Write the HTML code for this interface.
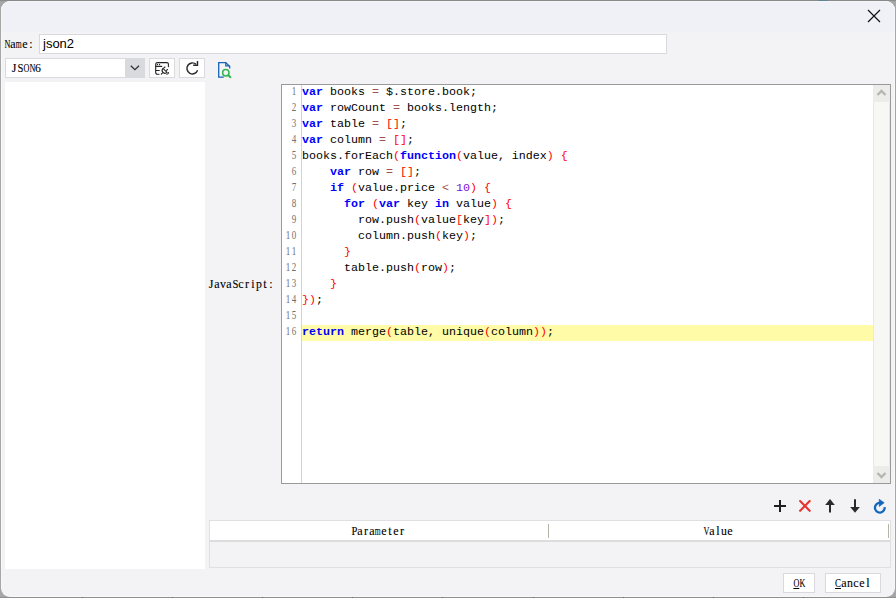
<!DOCTYPE html>
<html><head><meta charset="utf-8">
<style>
*{margin:0;padding:0;box-sizing:border-box}
html,body{width:896px;height:598px;overflow:hidden;background:#a6a6a6;font-family:"Liberation Sans",sans-serif}
.abs{position:absolute}
#dlg{position:absolute;left:1px;top:1px;width:894px;height:596px;background:#f3f3f6;border-radius:9px;overflow:hidden}
#title{position:absolute;left:0;top:0;width:894px;height:31px;background:#f0f1f7}
.ss{font-family:"Liberation Serif",serif;font-size:12px;color:#000;white-space:nowrap;line-height:14px;-webkit-text-stroke:0.12px #000}
.ss i{font-style:normal;display:inline-flex;justify-content:center;width:6px}
.ss b{font-weight:normal;display:inline-block}
#nameinp{left:39px;top:34px;width:628px;height:20px;background:#fff;border:1px solid #d9d9dd}
#combo{left:5px;top:58px;width:140px;height:20px;background:#fff;border:1px solid #dadade}
#drop{left:119px;top:-1px;width:20px;height:20px;background:#d9dadd}
.btn{top:58px;width:26px;height:20px;background:#fff;border:1px solid #dadade}
#leftp{left:5px;top:82px;width:200px;height:487px;background:#fff}
#editor{left:281px;top:84px;width:610px;height:400px;background:#fff;border:1px solid #9a9a9a}
#gutter{left:0;top:0;width:20px;height:398px;border-right:1px solid #d3d3d3}
#code{left:20px;top:-1px;font-family:"Liberation Mono",monospace;font-size:11.67px;line-height:16px;white-space:pre;color:#000}
.ln{position:absolute;right:4px;font-family:"Liberation Serif",serif;font-size:12px;line-height:16px;color:#707070;white-space:nowrap}
.ln i{font-style:normal;display:inline-flex;justify-content:center;width:6px}
.ln b{font-weight:normal;display:inline-block;transform:scaleX(0.75)}
.k{color:#0000ff;font-weight:bold}
.b{color:#ff0000}
.o{color:#a05050}
.n{color:#7a10dc}
#hl{left:20px;top:240px;width:571px;height:16px;background:#fffba6}
#vs{left:591px;top:0;width:17px;height:398px;background:#f7f7f5;border-left:1px solid #ebe8dc;border-right:1px solid #ebe8dc}
.sbtn{left:591px;width:17px;height:17px;background:#ececea}
#table{left:209px;top:520px;width:682px;height:48px;border:1px solid #e0e0e3;background:#f3f3f6}
#thead{left:0;top:0;width:680px;height:21px;background:#fff;border-bottom:2px solid #dcdcdc}
.pbtn{top:573px;height:20px;background:#fff;border:1px solid #dadade}
</style></head><body>
<div class="abs" style="left:0;top:0;width:896px;height:1px;background:#8a8a8a"></div><div class="abs" style="left:0;top:597px;width:896px;height:1px;background:#8f8f8f"></div>
<div class="abs" style="left:818px;top:0;width:10px;height:1px;background:#5e8590"></div>
<div class="abs" style="left:82px;top:597px;width:1px;height:1px;background:#666"></div><div class="abs" style="left:172px;top:597px;width:1px;height:1px;background:#666"></div><div class="abs" style="left:262px;top:597px;width:1px;height:1px;background:#666"></div><div class="abs" style="left:352px;top:597px;width:1px;height:1px;background:#666"></div><div class="abs" style="left:442px;top:597px;width:1px;height:1px;background:#666"></div><div class="abs" style="left:533px;top:597px;width:1px;height:1px;background:#666"></div><div class="abs" style="left:623px;top:597px;width:1px;height:1px;background:#666"></div><div class="abs" style="left:713px;top:597px;width:1px;height:1px;background:#666"></div><div class="abs" style="left:803px;top:597px;width:1px;height:1px;background:#666"></div>
<div id="dlg">
  <div id="title"></div>
  <div class="abs" style="left:0;top:0;width:894px;height:596px;border-radius:9px;border:1px solid rgba(255,255,255,0.4)"></div>
</div>
<!-- close X -->
<svg class="abs" style="left:866px;top:8px" width="16" height="16" viewBox="0 0 16 16"><path d="M2 2L14 14M14 2L2 14" stroke="#111" stroke-width="1.2"/></svg>

<div class="abs ss" style="left:4px;top:37px"><i><b style="transform:scaleX(0.681)">N</b></i><i><b>a</b></i><i><b style="transform:scaleX(0.632)">m</b></i><i><b>e</b></i><i><b>:</b></i></div>
<div id="nameinp" class="abs"><span class="abs" style="left:3px;top:1px;font-size:13px;color:#000">json2</span></div>

<div id="combo" class="abs"><div class="abs ss" style="left:5px;top:2px"><i><b>J</b></i><i><b style="transform:scaleX(0.884)">S</b></i><i><b style="transform:scaleX(0.681)">O</b></i><i><b style="transform:scaleX(0.681)">N</b></i><i><b style="transform:scaleX(0.983)">6</b></i></div>
  <div id="drop" class="abs"><svg class="abs" style="left:5px;top:6px" width="10" height="8" viewBox="0 0 10 8"><path d="M0.8 1.8L4.9 5.7L9 1.8" stroke="#2e2e2e" stroke-width="1.2" fill="none"/></svg></div>
</div>
<div class="abs btn" style="left:149px"></div>
<div class="abs btn" style="left:179px"></div>


<svg class="abs" style="left:149px;top:58px" width="26" height="20" viewBox="0 0 26 20"><g fill="none" stroke="#262626" stroke-width="1.1" stroke-linecap="round"><path d="M10 16.2H8.2A1.5 1.5 0 0 1 6.7 14.7V6.1A1.5 1.5 0 0 1 8.2 4.6H17.9A1.5 1.5 0 0 1 19.4 6.1V8.6"/><path d="M6.7 8.4H12.7M6.7 12.5H10.3"/><path d="M17.8 16.3A2 2 0 0 0 19.6 14.5"/><path d="M14 10.3L18.1 14.4A2.9 2.9 0 0 1 14 10.3Z"/><path d="M13.6 14.8L12.3 16.1M15 9.9L15.9 9M17.5 12.4L18.4 11.5"/></g><circle cx="8.4" cy="6.5" r="0.65" fill="#262626"/><circle cx="10.5" cy="6.5" r="0.65" fill="#262626"/></svg>
<svg class="abs" style="left:179px;top:58px" width="26" height="20" viewBox="0 0 26 20"><g fill="none" stroke="#2a2a2a" stroke-width="1.45"><path d="M17.1 6.3A5.5 5.5 0 1 0 18.6 12.3"/><path d="M14.2 7.2H18.5V3"/></g></svg>
<svg class="abs" style="left:212px;top:58px" width="26" height="24" viewBox="0 0 26 24"><g fill="none" stroke="#1764b8" stroke-width="1.3"><path d="M11.8 19.2H6.7V4.6H13.8L17.7 8.5V10.6"/><path d="M13.8 4.6V7.8H17.7"/></g><circle cx="13.8" cy="14.8" r="3.2" fill="none" stroke="#30b550" stroke-width="1.5"/><path d="M16.3 17.3L18.4 19.2" stroke="#30b550" stroke-width="2" stroke-linecap="round"/></svg>
<div id="leftp" class="abs"></div>

<div class="abs ss" style="left:208px;top:277px"><i><b>J</b></i><i><b>a</b></i><i><b style="transform:scaleX(0.983)">v</b></i><i><b>a</b></i><i><b style="transform:scaleX(0.884)">S</b></i><i><b>c</b></i><i><b>r</b></i><i><b>i</b></i><i><b style="transform:scaleX(0.983)">p</b></i><i><b>t</b></i><i><b>:</b></i></div>

<div id="editor" class="abs">
  <div id="hl" class="abs"></div>
  <div id="gutter" class="abs"><div class="ln" style="top:-2px"><i><b>1</b></i></div><div class="ln" style="top:14px"><i><b>2</b></i></div><div class="ln" style="top:30px"><i><b>3</b></i></div><div class="ln" style="top:46px"><i><b>4</b></i></div><div class="ln" style="top:62px"><i><b>5</b></i></div><div class="ln" style="top:78px"><i><b>6</b></i></div><div class="ln" style="top:94px"><i><b>7</b></i></div><div class="ln" style="top:110px"><i><b>8</b></i></div><div class="ln" style="top:126px"><i><b>9</b></i></div><div class="ln" style="top:142px"><i><b>1</b></i><i><b>0</b></i></div><div class="ln" style="top:158px"><i><b>1</b></i><i><b>1</b></i></div><div class="ln" style="top:174px"><i><b>1</b></i><i><b>2</b></i></div><div class="ln" style="top:190px"><i><b>1</b></i><i><b>3</b></i></div><div class="ln" style="top:206px"><i><b>1</b></i><i><b>4</b></i></div><div class="ln" style="top:222px"><i><b>1</b></i><i><b>5</b></i></div><div class="ln" style="top:238px"><i><b>1</b></i><i><b>6</b></i></div></div>
  <div id="code" class="abs"><span class="k">var</span> books <span class="o">=</span> $.store.book;
<span class="k">var</span> rowCount <span class="o">=</span> books.length;
<span class="k">var</span> table <span class="o">=</span> <span class="b">[]</span>;
<span class="k">var</span> column <span class="o">=</span> <span class="b">[]</span>;
books.forEach<span class="b">(</span><span class="k">function</span><span class="b">(</span>value, index<span class="b">)</span> <span class="b">{</span>
    <span class="k">var</span> row <span class="o">=</span> <span class="b">[]</span>;
    <span class="k">if</span> <span class="b">(</span>value.price <span class="o">&lt;</span> <span class="n">10</span><span class="b">)</span> <span class="b">{</span>
      <span class="k">for</span> <span class="b">(</span><span class="k">var</span> key <span class="k">in</span> value<span class="b">)</span> <span class="b">{</span>
        row.push<span class="b">(</span>value<span class="b">[</span>key<span class="b">])</span>;
        column.push<span class="b">(</span>key<span class="b">)</span>;
      <span class="b">}</span>
      table.push<span class="b">(</span>row<span class="b">)</span>;
    <span class="b">}</span>
<span class="b">})</span>;

<span class="k">return</span> merge<span class="b">(</span>table, unique<span class="b">(</span>column<span class="b">))</span>;</div>
  <div id="vs" class="abs"></div>
  <div class="abs sbtn" style="top:0"><svg class="abs" style="left:3px;top:4px" width="11" height="8" viewBox="0 0 11 8"><path d="M1.5 6L5.5 2L9.5 6" stroke="#b5b5b5" stroke-width="2.3" fill="none"/></svg></div>
  <div class="abs sbtn" style="top:381px"><svg class="abs" style="left:3px;top:5px" width="11" height="8" viewBox="0 0 11 8"><path d="M1.5 2L5.5 6L9.5 2" stroke="#b5b5b5" stroke-width="2.3" fill="none"/></svg></div>
</div>

<div id="table" class="abs">
  <div id="thead" class="abs"></div>
  <div class="abs ss" style="left:141px;top:3px"><i><b style="transform:scaleX(0.884)">P</b></i><i><b>a</b></i><i><b>r</b></i><i><b>a</b></i><i><b style="transform:scaleX(0.632)">m</b></i><i><b>e</b></i><i><b>t</b></i><i><b>e</b></i><i><b>r</b></i></div>
  <div class="abs" style="left:338px;top:3px;width:1px;height:14px;background:#b5b2a6"></div>
  <div class="abs ss" style="left:493px;top:3px"><i><b style="transform:scaleX(0.681)">V</b></i><i><b>a</b></i><i><b>l</b></i><i><b style="transform:scaleX(0.983)">u</b></i><i><b>e</b></i></div>
  <div class="abs" style="left:678px;top:3px;width:1px;height:14px;background:#b5b2a6"></div>
</div>


<svg class="abs" style="left:772px;top:498px" width="16" height="16" viewBox="0 0 16 16"><path d="M8 2V14M2 8H14" stroke="#1e1e1e" stroke-width="2"/></svg>
<svg class="abs" style="left:797px;top:498px" width="16" height="16" viewBox="0 0 16 16"><path d="M3.1 3.1L12.7 12.8M12.7 3.1L3.1 12.8" stroke="#e6332f" stroke-width="2.1" stroke-linecap="round"/></svg>
<svg class="abs" style="left:822px;top:498px" width="16" height="16" viewBox="0 0 16 16"><path d="M8 6V14.6" stroke="#2a2a2a" stroke-width="2"/><path d="M3.2 7L8 1.1L12.8 7Z" fill="#2a2a2a"/></svg>
<svg class="abs" style="left:847px;top:498px" width="16" height="16" viewBox="0 0 16 16"><path d="M8 1.3V10" stroke="#2a2a2a" stroke-width="2"/><path d="M3.2 9L8 14.8L12.8 9Z" fill="#2a2a2a"/></svg>
<svg class="abs" style="left:872px;top:498px" width="16" height="16" viewBox="0 0 16 16"><path d="M12.6 9.2A4.85 4.85 0 1 1 7.6 4.9H8.5" stroke="#1466bd" stroke-width="2.3" fill="none"/><path d="M7.2 1.2L12.2 4.8L7.2 8.5Z" fill="#1466bd" stroke="#1466bd" stroke-width="0.6" stroke-linejoin="round"/></svg>
<div class="abs pbtn" style="left:783px;width:32px"><div class="abs ss" style="left:9px;top:2px"><i style="text-decoration:underline"><b style="transform:scaleX(0.681)">O</b></i><i><b style="transform:scaleX(0.681)">K</b></i></div></div>
<div class="abs pbtn" style="left:825px;width:56px"><div class="abs ss" style="left:9px;top:2px"><i style="text-decoration:underline"><b style="transform:scaleX(0.737)">C</b></i><i><b>a</b></i><i><b style="transform:scaleX(0.983)">n</b></i><i><b>c</b></i><i><b>e</b></i><i><b>l</b></i></div></div>
</body></html>
